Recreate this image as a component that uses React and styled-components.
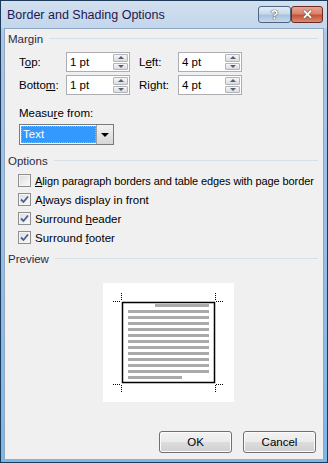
import React from "react";
import styled, { createGlobalStyle } from "styled-components";

const Global = createGlobalStyle`
  html, body { margin: 0; padding: 0; background: #fff; }
  body { font-family: "Liberation Sans", Arial, sans-serif; font-size: 11.5px; color: #000; }
  * { box-sizing: border-box; }
`;

const Window = styled.div`
  width: 328px;
  height: 463px;
  display: flex;
  flex-direction: column;
  border: 1px solid #1d3a58;
  background: linear-gradient(#c2d5ea, #a9c6e6 40px, #7db6e6);
  padding: 0 3px 3px 3px;
`;

const TitleBar = styled.div`
  height: 27px;
  display: flex;
  align-items: center;
  padding: 0 4px 0 6px;
  background: linear-gradient(#d2e0ef, #c3d6ec);
  margin: 0 -3px;
`;

const Title = styled.div`
  flex: 1;
  font-size: 12.5px;
  color: #1e1850;
  padding-top: 1px;
`;

const CaptionButton = styled.div`
  width: ${(p) => (p.$close ? "32px" : "33px")};
  height: 17px;
  border: 1px solid ${(p) => (p.$close ? "#6d2a24" : "#4c6680")};
  border-radius: 3px;
  background: ${(p) =>
    p.$close
      ? "linear-gradient(#e8a493, #d9826d 45%, #c75235 55%, #d88a75)"
      : "linear-gradient(#e3ecf6, #c9d9ec 45%, #a9c1de 55%, #c6d8ee)"};
  display: flex;
  align-items: center;
  justify-content: center;
  color: #fff;
  font-weight: bold;
  font-size: 13px;
  text-shadow: 0 0 1px #333, 0 0 1px #333;
`;

const Body = styled.div`
  flex: 1;
  background: #f0f0f0;
  border: 1px solid #8fa9c4;
  border-bottom: none;
  padding: 2px 5px 0 3px;
  display: flex;
  flex-direction: column;
`;

const Heading = styled.div`
  display: flex;
  align-items: center;
  gap: 6px;
  height: 15px;
  color: #2b2b3a;
  &::after {
    content: "";
    flex: 1;
    height: 1px;
    background: #d5dfe5;
  }
`;

const MarginGrid = styled.div`
  display: grid;
  grid-template-columns: 47px 64px 9px 39px 64px;
  grid-auto-rows: 20px;
  row-gap: 3px;
  align-items: center;
  padding-left: 11px;
  margin-top: 6px;
`;

const Label = styled.span`
  color: #000;
  white-space: nowrap;
  u { text-decoration: underline; }
`;

const SpinBox = styled.div`
  height: 20px;
  display: flex;
  border: 1px solid #abadb3;
  background: #fff;
  padding: 1px;
`;

const SpinText = styled.div`
  flex: 1;
  padding: 1px 0 0 2px;
  line-height: 15px;
`;

const SpinButtons = styled.div`
  width: 15px;
  display: flex;
  flex-direction: column;
  gap: 1px;
`;

const SpinBtn = styled.div`
  flex: 1;
  border: 1px solid #b5b5b5;
  border-radius: 1px;
  background: linear-gradient(#f6f6f6, #dcdcdc);
  display: flex;
  align-items: center;
  justify-content: center;
  &::before {
    content: "";
    border-left: 3px solid transparent;
    border-right: 3px solid transparent;
    ${(p) =>
      p.$down
        ? "border-top: 3px solid #4d6185;"
        : "border-bottom: 3px solid #4d6185;"}
  }
`;

const MeasureLabel = styled.div`
  padding-left: 11px;
  margin-top: 12px;
  height: 14px;
`;

const Select = styled.div`
  margin: 3px 0 0 11px;
  width: 95px;
  height: 21px;
  border: 1px solid #7a7a7a;
  display: flex;
  background: #fff;
  padding: 1px;
`;

const Selected = styled.div`
  flex: 1;
  background: #3399ff;
  color: #fff;
  outline: 1px dotted #f5a040;
  outline-offset: -1px;
  padding: 0 2px;
  line-height: 17px;
`;

const SelectArrow = styled.div`
  width: 17px;
  margin: -1px -1px -1px 0;
  border-left: 1px solid #a0a0a0;
  background: linear-gradient(#f2f2f2, #d6d6d6);
  display: flex;
  align-items: center;
  justify-content: center;
  &::before {
    content: "";
    border-left: 4px solid transparent;
    border-right: 4px solid transparent;
    border-top: 4px solid #000;
  }
`;

const SectionGap = styled.div`
  height: ${(p) => p.$h}px;
`;

const CheckList = styled.div`
  display: flex;
  flex-direction: column;
  gap: 6px;
  padding-left: 10px;
  margin-top: 6px;
`;

const CheckRow = styled.label`
  display: flex;
  align-items: center;
  gap: 4px;
  height: 13px;
`;

const LongLabel = styled(Label)`
  font-size: 11px;
  letter-spacing: -0.1px;
`;

const Box = styled.span`
  width: 13px;
  height: 13px;
  flex: none;
  border: 1px solid #8e8f8f;
  background: linear-gradient(135deg, #dcdcdc, #fbfbfb);
  box-shadow: inset 0 0 0 1px #f4f4f4;
  display: flex;
  align-items: center;
  justify-content: center;
`;

const PreviewArea = styled.div`
  display: flex;
  justify-content: center;
  margin-top: 17px;
  padding-left: 10px;
`;

const PreviewCard = styled.div`
  width: 131px;
  height: 119px;
  background: #fff;
`;

const Footer = styled.div`
  margin-top: auto;
  display: flex;
  justify-content: flex-end;
  gap: 11px;
  padding: 0 2px 6px 0;
`;

const Button = styled.div`
  width: 73px;
  height: 22px;
  border: 1px solid #707070;
  border-radius: 3px;
  background: linear-gradient(#f2f2f2, #ebebeb 48%, #dddddd 52%, #cfcfcf);
  box-shadow: inset 0 0 0 1px #fcfcfc;
  display: flex;
  align-items: center;
  justify-content: center;
`;

const Check = () => (
  <svg width="9" height="9" viewBox="0 0 9 9">
    <path d="M1 4.5 L3.5 7 L8 1.5" fill="none" stroke="#4a5f97" strokeWidth="1.8" />
  </svg>
);

const Spin = ({ value }) => (
  <SpinBox>
    <SpinText>{value}</SpinText>
    <SpinButtons>
      <SpinBtn />
      <SpinBtn $down />
    </SpinButtons>
  </SpinBox>
);

const PageDrawing = () => {
  const lines = [];
  for (let i = 0; i < 11; i++) {
    lines.push(<rect key={i} x="25" y={27 + i * 6} width="81" height="3" fill="#aaa" />);
  }
  return (
    <svg width="131" height="119" viewBox="0 0 131 119">
      <rect x="19.5" y="19.5" width="92" height="80" fill="none" stroke="#000" strokeWidth="1.5" />
      <rect x="52" y="21" width="54" height="3" fill="#aaa" />
      {lines}
      <rect x="25" y="93" width="54" height="3" fill="#aaa" />
      <g stroke="#000" strokeDasharray="1 1" strokeWidth="1">
        <path d="M10 18.5 H18 M18.5 10 V18" />
        <path d="M113 18.5 H121 M112.5 10 V18" />
        <path d="M10 101.5 H18 M18.5 102 V110" />
        <path d="M113 101.5 H121 M112.5 102 V110" />
      </g>
    </svg>
  );
};

export default function App() {
  return (
    <>
      <Global />
      <Window>
        <TitleBar>
          <Title>Border and Shading Options</Title>
          <CaptionButton>?</CaptionButton>
          <CaptionButton $close>✕</CaptionButton>
        </TitleBar>
        <Body>
          <Heading>Margin</Heading>
          <MarginGrid>
            <Label>T<u>o</u>p:</Label>
            <Spin value="1 pt" />
            <span />
            <Label>L<u>e</u>ft:</Label>
            <Spin value="4 pt" />
            <Label>Botto<u>m</u>:</Label>
            <Spin value="1 pt" />
            <span />
            <Label>Ri<u>g</u>ht:</Label>
            <Spin value="4 pt" />
          </MarginGrid>
          <MeasureLabel>
            <Label>Measu<u>r</u>e from:</Label>
          </MeasureLabel>
          <Select>
            <Selected>Text</Selected>
            <SelectArrow />
          </Select>
          <SectionGap $h={8} />
          <Heading>Options</Heading>
          <CheckList>
            <CheckRow>
              <Box />
              <LongLabel><u>A</u>lign paragraph borders and table edges with page border</LongLabel>
            </CheckRow>
            <CheckRow>
              <Box><Check /></Box>
              <Label>A<u>l</u>ways display in front</Label>
            </CheckRow>
            <CheckRow>
              <Box><Check /></Box>
              <Label>Surround <u>h</u>eader</Label>
            </CheckRow>
            <CheckRow>
              <Box><Check /></Box>
              <Label>Surround <u>f</u>ooter</Label>
            </CheckRow>
          </CheckList>
          <SectionGap $h={7} />
          <Heading>Preview</Heading>
          <PreviewArea>
            <PreviewCard>
              <PageDrawing />
            </PreviewCard>
          </PreviewArea>
          <Footer>
            <Button>OK</Button>
            <Button>Cancel</Button>
          </Footer>
        </Body>
      </Window>
    </>
  );
}
